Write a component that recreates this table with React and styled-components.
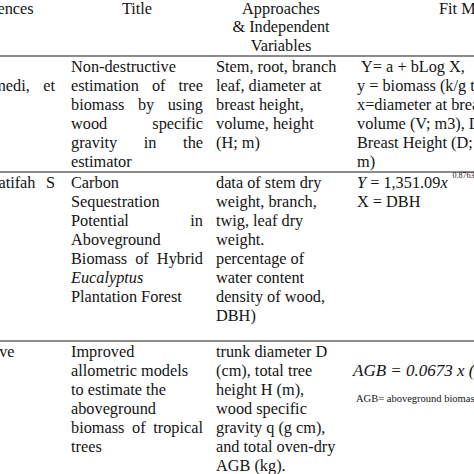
import React from 'react'
import styled, { createGlobalStyle } from 'styled-components'

const Global = createGlobalStyle`
  html, body {
    margin: 0;
    padding: 0;
    background: #fff;
    overflow: hidden;
  }
  body {
    font-family: "Liberation Serif", "Times New Roman", serif;
    color: #141414;
  }
`

const Page = styled.div`
  width: 474px;
  height: 474px;
  overflow: hidden;
`

const Table = styled.table`
  border-collapse: collapse;
  table-layout: fixed;
  width: 662px;
  margin: 0 0 0 -62px;
  font-size: 16.3px;
  line-height: 19px;
`

const pads = {
  ref: '0 9px 0 2px',
  title: '0 7px',
  approach: '0 4px 0 6px',
  fit: '0 8px 0 7px',
}

const Head = styled.th`
  font-weight: normal;
  line-height: 18.3px;
  text-align: center;
  vertical-align: top;
  padding: ${(p) => pads[p.$col]};
  border-bottom: 2px solid #8c8c8c;
`

const Cell = styled.td`
  vertical-align: top;
  padding: ${(p) => pads[p.$col]};
  padding-top: ${(p) => (p.$top ? p.$top : 0)}px;
  padding-bottom: ${(p) => (p.$bottom ? p.$bottom : 0)}px;
  border-bottom: ${(p) => (p.$last ? 'none' : '2px solid #8c8c8c')};
`

const Line = styled.div`
  white-space: nowrap;
  height: 19px;
  text-align: ${(p) => (p.$j ? 'justify' : 'left')};
  text-align-last: ${(p) => (p.$j ? 'justify' : 'left')};
  font-style: ${(p) => (p.$i ? 'italic' : 'normal')};
`

const Formula = styled.div`
  font-style: italic;
  font-size: 17px;
  line-height: 19px;
  white-space: nowrap;
  margin-left: -4px;
`

const Note = styled.div`
  font-size: 10.5px;
  line-height: 12px;
  margin-top: 13px;
  margin-left: -1px;
  white-space: nowrap;
`

const Sup = styled.span`
  font-size: 8px;
  line-height: 0;
  vertical-align: 10px;
  margin-left: 5px;
`

const I = styled.span`
  font-style: italic;
`

const Lines = ({ items }) =>
  items.map((l, k) =>
    typeof l === 'string' ? (
      <Line key={k}>{l}</Line>
    ) : (
      <Line key={k} $j={l.j} $i={l.i}>
        {l.t}
      </Line>
    )
  )

export default function App() {
  return (
    <Page>
      <Global />
      <Table>
        <colgroup>
          <col style={{ width: 126 }} />
          <col style={{ width: 146 }} />
          <col style={{ width: 140 }} />
          <col style={{ width: 250 }} />
        </colgroup>
        <thead>
          <tr>
            <Head $col="ref">References</Head>
            <Head $col="title">Title</Head>
            <Head $col="approach">
              Approaches
              <br />
              &amp; Independent
              <br />
              Variables
            </Head>
            <Head $col="fit">Fit Models</Head>
          </tr>
        </thead>
        <tbody>
          <tr>
            <Cell $col="ref" $top={19}>
              <Lines items={[{ t: 'Ali Hamedi, et', j: true }, 'al.']} />
            </Cell>
            <Cell $col="title">
              <Lines
                items={[
                  'Non-destructive',
                  { t: 'estimation of tree', j: true },
                  { t: 'biomass by using', j: true },
                  { t: 'wood specific', j: true },
                  { t: 'gravity in the', j: true },
                  'estimator',
                ]}
              />
            </Cell>
            <Cell $col="approach">
              <Lines
                items={[
                  'Stem, root, branch',
                  'leaf, diameter at',
                  'breast height,',
                  'volume, height',
                  '(H; m)',
                ]}
              />
            </Cell>
            <Cell $col="fit">
              <Lines
                items={[
                  '\u00a0Y= a + bLog X,',
                  'y = biomass (k/g tree)',
                  'x=diameter at breast height',
                  'volume (V; m3), Diameter at',
                  'Breast Height (D; cm), Height (H;',
                  'm)',
                ]}
              />
            </Cell>
          </tr>
          <tr>
            <Cell $col="ref" $bottom={15}>
              <Lines items={[{ t: 'Nurul Latifah S', j: true }]} />
            </Cell>
            <Cell $col="title" $bottom={15}>
              <Lines
                items={[
                  'Carbon',
                  'Sequestration',
                  { t: 'Potential in', j: true },
                  'Aboveground',
                  { t: 'Biomass of Hybrid', j: true },
                  { t: 'Eucalyptus', i: true },
                  'Plantation Forest',
                ]}
              />
            </Cell>
            <Cell $col="approach" $bottom={15}>
              <Lines
                items={[
                  'data of stem dry',
                  'weight, branch,',
                  'twig, leaf dry',
                  'weight.',
                  'percentage of',
                  'water content',
                  'density of wood,',
                  'DBH)',
                ]}
              />
            </Cell>
            <Cell $col="fit" $bottom={15}>
              <Line>
                <I>Y</I> = 1,351.09<I>x</I>
                <Sup>0.8763</Sup>
              </Line>
              <Line>X = DBH</Line>
            </Cell>
          </tr>
          <tr>
            <Cell $col="ref" $last>
              <Lines items={['Jean Chave']} />
            </Cell>
            <Cell $col="title" $last>
              <Lines
                items={[
                  'Improved',
                  'allometric models',
                  'to estimate the',
                  'aboveground',
                  { t: 'biomass of tropical', j: true },
                  'trees',
                ]}
              />
            </Cell>
            <Cell $col="approach" $last>
              <Lines
                items={[
                  'trunk diameter D',
                  '(cm), total tree',
                  'height H (m),',
                  'wood specific',
                  'gravity q (g cm),',
                  'and total oven-dry',
                  'AGB (kg).',
                ]}
              />
            </Cell>
            <Cell $col="fit" $last>
              <Line />
              <Formula>AGB = 0.0673 x (ρD²H)^0.976</Formula>
              <Note>AGB= aboveground biomass (kg)</Note>
            </Cell>
          </tr>
        </tbody>
      </Table>
    </Page>
  )
}
